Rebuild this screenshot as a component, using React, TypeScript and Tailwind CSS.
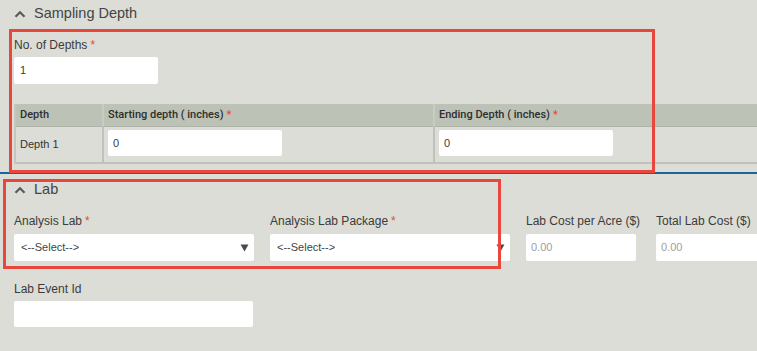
import React from "react";

const Chevron = () => (
  <svg width="12" height="8" viewBox="0 0 12 8" className="shrink-0">
    <path d="M1.5 6.8 L6 2.3 L10.5 6.8" fill="none" stroke="#5a5a5a" strokeWidth="2.2" />
  </svg>
);

const Star = () => <span className="text-[#e8473e] ml-[3px]">*</span>;

const Caret = () => (
  <svg width="9" height="8" viewBox="0 0 9 8" className="absolute right-[5px] top-1/2 -translate-y-1/2">
    <path d="M0.5 0.5 H8.5 L4.5 7.5 Z" fill="#4a4a4a" />
  </svg>
);

const headCls =
  "h-[23px] bg-[#bdc2b6] border-b border-[#aeb2a8] flex items-center pl-[4px] font-medium text-[#2e2e2e]";

export default function App() {
  return (
    <div
      className="relative w-[757px] h-[351px] overflow-hidden bg-[#dbddd6] text-[#3b3b3b]"
      style={{ fontFamily: '"Liberation Sans", Arial, sans-serif' }}
    >
      {/* Sampling Depth section */}
      <div className="flex items-center h-[28px] pl-[14px] gap-[8px]">
        <Chevron />
        <span className="text-[14.5px] text-[#444]">Sampling Depth</span>
      </div>
      <div className="pl-[14px] pt-[9px]">
        <div className="text-[12px] leading-[16px]">
          No. of Depths
          <Star />
        </div>
        <div className="mt-[4px] w-[144px] h-[27px] bg-white rounded-[2px] flex items-center px-[6px] text-[11px]">
          1
        </div>
      </div>
      <div className="ml-[14px] mt-[20px] grid grid-cols-[86px_331px_1fr] border-l-2 border-[#c4c7bf] text-[11px]">
        <div className={headCls} style={{ fontFamily: "Roboto, sans-serif" }}>
          Depth
        </div>
        <div className={headCls + " border-l-2 border-l-[#c9ccc3]"} style={{ fontFamily: "Roboto, sans-serif" }}>
          Starting depth ( inches)
          <Star />
        </div>
        <div className={headCls + " border-l-2 border-l-[#c9ccc3]"} style={{ fontFamily: "Roboto, sans-serif" }}>
          Ending Depth ( inches)
          <Star />
        </div>
        <div className="h-[37px] border-b-2 border-[#bfc1ba] flex items-center pl-[4px] text-[#333]">
          Depth 1
        </div>
        <div className="h-[37px] border-b-2 border-l-2 border-[#bfc1ba] flex items-start pt-[3px] pl-[4px]">
          <div className="w-[174px] h-[26px] bg-white rounded-[2px] flex items-center px-[5px]">0</div>
        </div>
        <div className="h-[37px] border-b-2 border-l-2 border-[#bfc1ba] flex items-start pt-[3px] pl-[4px]">
          <div className="w-[174px] h-[26px] bg-white rounded-[2px] flex items-center px-[5px]">0</div>
        </div>
      </div>
      <div className="mt-[8px] h-[2px] bg-[#19679a]" />

      {/* Lab section */}
      <div className="flex items-center h-[30px] pl-[14px] gap-[8px] mt-[1px]">
        <Chevron />
        <span className="text-[14.5px] text-[#444]">Lab</span>
      </div>
      <div className="flex pl-[14px] pt-[8px] text-[12px]">
        <div className="w-[240px] shrink-0">
          <div className="leading-[16px]">
            Analysis Lab
            <Star />
          </div>
          <div className="relative mt-[5px] h-[27px] bg-white rounded-[2px] flex items-center px-[7px] text-[11px] text-[#444]">
            &lt;--Select--&gt;
            <Caret />
          </div>
        </div>
        <div className="w-[240px] ml-[16px] shrink-0">
          <div className="leading-[16px]">
            Analysis Lab Package
            <Star />
          </div>
          <div className="relative mt-[5px] h-[27px] bg-white rounded-[2px] flex items-center px-[7px] text-[11px] text-[#444]">
            &lt;--Select--&gt;
            <Caret />
          </div>
        </div>
        <div className="w-[110px] ml-[16px] shrink-0">
          <div className="leading-[16px] whitespace-nowrap">Lab Cost per Acre ($)</div>
          <div className="mt-[5px] h-[27px] bg-white rounded-[2px] flex items-center px-[5px] text-[11px] text-[#a0a0a0]">
            0.00
          </div>
        </div>
        <div className="w-[110px] ml-[20px] shrink-0">
          <div className="leading-[16px] whitespace-nowrap">Total Lab Cost ($)</div>
          <div className="mt-[5px] h-[27px] bg-white rounded-[2px] flex items-center px-[5px] text-[11px] text-[#a0a0a0]">
            0.00
          </div>
        </div>
      </div>
      <div className="pl-[14px] pt-[20px] text-[12px]">
        <div className="leading-[16px]">Lab Event Id</div>
        <div className="mt-[4px] w-[239px] h-[26px] bg-white rounded-[2px]" />
      </div>

      {/* Annotation boxes */}
      <div className="absolute left-[9px] top-[29px] w-[646px] h-[144px] border-[3px] border-[#e8473e] pointer-events-none" />
      <div className="absolute left-[3px] top-[179px] w-[498px] h-[90px] border-[3px] border-[#e8473e] pointer-events-none" />
    </div>
  );
}
